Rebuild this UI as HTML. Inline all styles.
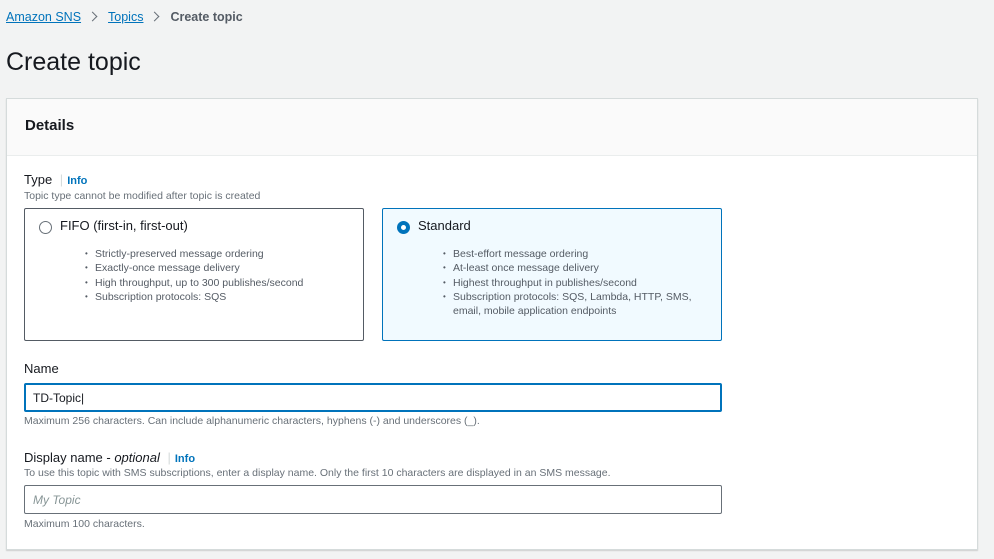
<!DOCTYPE html>
<html><head><style>
*{box-sizing:border-box;margin:0;padding:0}
body{width:994px;height:559px;background:#f2f3f3;font-family:"Liberation Sans",sans-serif;color:#16191f;position:relative;overflow:hidden}
.a{position:absolute}
.bc{top:10px;left:6px;font-size:12.5px;color:#545b64}
.bc a{color:#0073bb;text-decoration:underline}
.chev{display:inline-block;width:7px;height:7px;border-right:1.6px solid #687078;border-top:1.6px solid #687078;transform:rotate(45deg);margin:0 12px 1px 8px}
.card{left:6px;top:98px;width:972px;height:452px;background:#fff;border:1px solid #d5dbdb;box-shadow:0 1px 1px rgba(0,0,0,.15)}
.hd{position:absolute;left:0;top:0;width:100%;height:57px;background:#fafafa;border-bottom:1px solid #eaeded}
.lbl{font-size:13px;color:#16191f}
.info{color:#0073bb;font-weight:bold;font-size:11px}
.sm{font-size:10.5px;color:#687078}
.box{border:1px solid #545b64;border-radius:2px}
ul{font-size:10.5px;color:#545b64;line-height:14.3px;padding-left:0;list-style:none}
ul li:before{content:"•";font-size:8px;position:absolute;margin-left:-10px}
ul li{position:relative}
.inp{border:1px solid #aab7b8;border-radius:2px;background:#fff;font-size:12px}
</style></head><body>
<div class="a bc"><a>Amazon SNS</a><span class="chev"></span><a>Topics</a><span class="chev"></span><b>Create topic</b></div>
<div class="a" style="left:6px;top:48px;font-size:25px">Create topic</div>
<div class="a card"><div class="hd"><div style="position:absolute;left:18px;top:18px;font-size:15px;font-weight:bold">Details</div></div></div>
<div class="a lbl" style="left:24px;top:172px">Type <span style="color:#d5dbdb;margin:0 4px">|</span><span class="info">Info</span></div>
<div class="a sm" style="left:24px;top:190px">Topic type cannot be modified after topic is created</div>
<div class="a box" style="left:24px;top:208px;width:340px;height:133px">
<div class="a" style="left:14px;top:12px;width:13px;height:13px;border:1.5px solid #687078;border-radius:50%"></div>
<div class="a lbl" style="left:35px;top:9px">FIFO (first-in, first-out)</div>
<ul class="a" style="left:70px;top:38px"><li>Strictly-preserved message ordering</li><li>Exactly-once message delivery</li><li>High throughput, up to 300 publishes/second</li><li>Subscription protocols: SQS</li></ul></div>
<div class="a box" style="left:382px;top:208px;width:340px;height:133px;border-color:#0073bb;background:#f1faff">
<div class="a" style="left:14px;top:12px;width:13px;height:13px;border:4px solid #0073bb;border-radius:50%;background:#fff"></div>
<div class="a lbl" style="left:35px;top:9px">Standard</div>
<ul class="a" style="left:70px;top:38px"><li>Best-effort message ordering</li><li>At-least once message delivery</li><li>Highest throughput in publishes/second</li><li>Subscription protocols: SQS, Lambda, HTTP, SMS,<br>email, mobile application endpoints</li></ul></div>
<div class="a lbl" style="left:24px;top:361px">Name</div>
<div class="a inp" style="left:24px;top:383px;width:698px;height:29px;border:2px solid #0073bb;padding:6px 7px;color:#16191f">TD-Topic|</div>
<div class="a sm" style="left:24px;top:415px">Maximum 256 characters. Can include alphanumeric characters, hyphens (-) and underscores (_).</div>
<div class="a lbl" style="left:24px;top:450px">Display name - <i>optional</i> <span style="color:#d5dbdb;margin:0 4px">|</span><span class="info">Info</span></div>
<div class="a sm" style="left:24px;top:467px">To use this topic with SMS subscriptions, enter a display name. Only the first 10 characters are displayed in an SMS message.</div>
<div class="a inp" style="left:24px;top:485px;width:698px;height:29px;padding:7px 8px;color:#879596;font-style:italic;border-color:#687078">My Topic</div>
<div class="a sm" style="left:24px;top:518px">Maximum 100 characters.</div>
</body></html>
